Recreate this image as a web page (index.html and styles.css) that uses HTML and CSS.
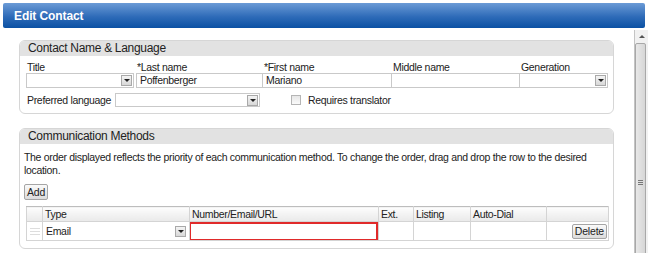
FILE: index.html
```html
<!DOCTYPE html>
<html lang="en">

<head>
  <meta charset="UTF-8">
  <title>Edit Contact</title>
  <link rel="stylesheet" href="styles.css">
</head>

<body>
  <div class="Dialog">
    <div class="Dialog-title">Edit Contact</div>
    <div class="Dialog-body">
      <div class="Dialog-content">
        <div class="Panel Panel--name">
          <div class="Panel-legend">Contact Name &amp; Language</div>
          <div class="NameGrid">
            <div class="Field Field--title">
              <label>Title</label>
              <div class="Select"><span class="Select-value"></span><span class="Select-btn"></span></div>
            </div>
            <div class="Field Field--last">
              <label>*Last name</label>
              <div class="Text">Poffenberger</div>
            </div>
            <div class="Field Field--first">
              <label>*First name</label>
              <div class="Text">Mariano</div>
            </div>
            <div class="Field Field--middle">
              <label>Middle name</label>
              <div class="Text"></div>
            </div>
            <div class="Field Field--gen">
              <label>Generation</label>
              <div class="Select"><span class="Select-value"></span><span class="Select-btn"></span></div>
            </div>
          </div>
          <div class="LangRow">
            <label class="LangRow-label">Preferred language</label>
            <div class="Select Select--lang"><span class="Select-value"></span><span class="Select-btn"></span></div>
            <span class="Check"></span>
            <span class="LangRow-check">Requires translator</span>
          </div>
        </div>

        <div class="Panel Panel--comm">
          <div class="Panel-legend">Communication Methods</div>
          <p class="Panel-note">The order displayed reflects the priority of each communication method. To change the order, drag and drop the row to the desired location.</p>
          <button class="Btn Btn--add">Add</button>
          <table class="Methods">
            <thead>
              <tr>
                <th class="col-handle"></th>
                <th class="col-type">Type</th>
                <th class="col-num">Number/Email/URL</th>
                <th class="col-ext">Ext.</th>
                <th class="col-listing">Listing</th>
                <th class="col-dial">Auto-Dial</th>
                <th class="col-del"></th>
              </tr>
            </thead>
            <tbody>
              <tr>
                <td class="col-handle"><span class="Grip"></span></td>
                <td class="col-type">
                  <div class="Select Select--cell"><span class="Select-value">Email</span><span class="Select-btn"></span></div>
                </td>
                <td class="col-num"><div class="Invalid"></div></td>
                <td class="col-ext"></td>
                <td class="col-listing"></td>
                <td class="col-dial"></td>
                <td class="col-del"><button class="Btn Btn--del">Delete</button></td>
              </tr>
            </tbody>
          </table>
        </div>
      </div>
      <div class="Scrollbar">
        <div class="Scrollbar-up"></div>
        <div class="Scrollbar-thumb"><span class="Scrollbar-grip"></span></div>
      </div>
    </div>
  </div>
</body>

</html>
```

FILE: styles.css
```css
body {
  margin: 0;
  background: #fff;
  color: #222;
  font-family: "Liberation Sans", Arial, sans-serif;
  font-size: 10.5px;
  letter-spacing: -0.32px;
}

* {
  box-sizing: border-box;
}

.Dialog {
  padding: 3px 3px 0;
  height: 253px;
  overflow: hidden;
}

.Dialog-title {
  height: 25px;
  padding: 6px 0 0 11px;
  border-radius: 2px;
  background: linear-gradient(#6b9bd6, #2e6bb8 55%, #0b51a4);
  color: #fff;
  font-size: 12px;
  font-weight: bold;
  letter-spacing: -0.1px;
}

.Dialog-body {
  display: flex;
  height: 225px;
  margin: 2px -3px 0 0;
}

.Dialog-content {
  flex: 1;
  padding: 10px 0 0 16px;
}

.Panel {
  width: 595px;
  border: 1px solid #d6d6d6;
  border-radius: 6px;
}

.Panel--comm {
  margin-top: 14px;
  height: 121px;
}

.Panel-legend {
  height: 15px;
  padding: 0 0 0 8px;
  background: #e2e2e2;
  border-radius: 5px 5px 0 0;
  color: #222;
  font-size: 12px;
  letter-spacing: -0.3px;
  line-height: 15px;
}

.NameGrid {
  display: grid;
  grid-template-columns: 110px 127px 129px 128px 88px;
  padding: 6px 0 0 6px;
}

.Field label {
  display: block;
  height: 11px;
  padding-left: 1px;
  line-height: 11px;
}

.Field--title .Select {
  width: 108px;
}

.Select,
.Text {
  position: relative;
  height: 15px;
  border: 1px solid #c9c9c9;
  background: #fff;
  line-height: 13px;
  padding-left: 3px;
}

.Field--first .Text,
.Field--middle .Text,
.Field--gen .Select {
  margin-left: -1px;
}

.Select-btn {
  position: absolute;
  top: 1px;
  right: 1px;
  width: 11px;
  height: 11px;
  border: 1px solid #a9a9a9;
  background: linear-gradient(#f4f4f4, #d8d8d8);
}

.Select-btn::after {
  content: "";
  position: absolute;
  left: 2px;
  top: 3px;
  border-left: 3px solid transparent;
  border-right: 3px solid transparent;
  border-top: 3px solid #222;
}

.LangRow {
  display: flex;
  align-items: center;
  padding: 5px 0 6px 7px;
}

.LangRow-label {
  width: 88px;
  white-space: nowrap;
}

.Select--lang {
  width: 145px;
  height: 14px;
}

.Check {
  width: 10px;
  height: 10px;
  margin: 0 7px 0 31px;
  border: 1px solid #b5b5b5;
  background: linear-gradient(#e6e6e6, #fafafa);
}

.Panel-note {
  margin: 7px 0 0 4px;
  width: 575px;
  line-height: 13px;
}

.Btn {
  appearance: none;
  padding: 0 2px;
  border: 1px solid #a5a5a5;
  border-radius: 2px;
  background: linear-gradient(#fafafa, #dcdcdc);
  color: #222;
  font-family: inherit;
  font-size: 10.5px;
  letter-spacing: -0.2px;
}

.Btn--add {
  display: block;
  height: 16px;
  margin: 7px 0 0 4px;
}

.Methods {
  margin: 6px 0 0 6px;
  width: 582px;
  border-collapse: collapse;
  table-layout: fixed;
}

.Methods th,
.Methods td {
  padding: 0 0 0 2px;
  border: 1px solid #d4d4d4;
  text-align: left;
  font-weight: normal;
}

.Methods th {
  height: 15px;
  border-top-color: #bdbdbd;
  background: linear-gradient(#fdfdfd, #e9e9e9);
  line-height: 13px;
}

.Methods td {
  height: 19px;
}

.col-handle { width: 16px; }
.col-type { width: 147px; }
.col-num { width: 189px; }
.col-ext { width: 35px; }
.col-listing { width: 57px; }
.col-dial { width: 76px; }
.col-del { width: 62px; }

.Methods td.col-num {
  padding: 0;
}

.Methods td.col-type {
  padding: 0 2px 0 0;
}

.Select--cell {
  border: 0;
  height: 17px;
  padding-left: 3px;
  line-height: 17px;
}

.Select--cell .Select-btn {
  top: 3px;
}

.Grip {
  display: block;
  width: 10px;
  height: 7px;
  margin-left: 1px;
  border-top: 1px solid #ddd;
  border-bottom: 1px solid #ddd;
  background: linear-gradient(transparent 2px, #ddd 2px, #ddd 3px, transparent 3px);
}

.Invalid {
  height: 19px;
  border: 2px solid #e02a2a;
  margin: -1px 0 -1px -1px;
}

.Methods td.col-del {
  text-align: right;
  padding-right: 1px;
}

.Btn--del {
  height: 15px;
  padding: 0 2px;
}

.Scrollbar {
  width: 14px;
  border-left: 1px solid #c4c4c4;
  background: #f1f1f1;
  padding-top: 3px;
}

.Scrollbar-up {
  height: 9px;
  position: relative;
}

.Scrollbar-up::after {
  content: "";
  position: absolute;
  left: 4px;
  top: 2px;
  border-left: 3px solid transparent;
  border-right: 3px solid transparent;
  border-bottom: 3px solid #555;
}

.Scrollbar-thumb {
  height: 260px;
  width: 11px;
  margin-top: 1px;
  border: 1px solid #a8a8a8;
  border-radius: 2px;
  background: linear-gradient(90deg, #e8e8e8, #d6d6d6);
}

.Scrollbar-grip {
  display: block;
  width: 5px;
  height: 5px;
  margin: 136px 0 0 2px;
  background: linear-gradient(#777 1px, transparent 1px, transparent 2px, #777 2px, #777 3px, transparent 3px, transparent 4px, #777 4px);
}
```
